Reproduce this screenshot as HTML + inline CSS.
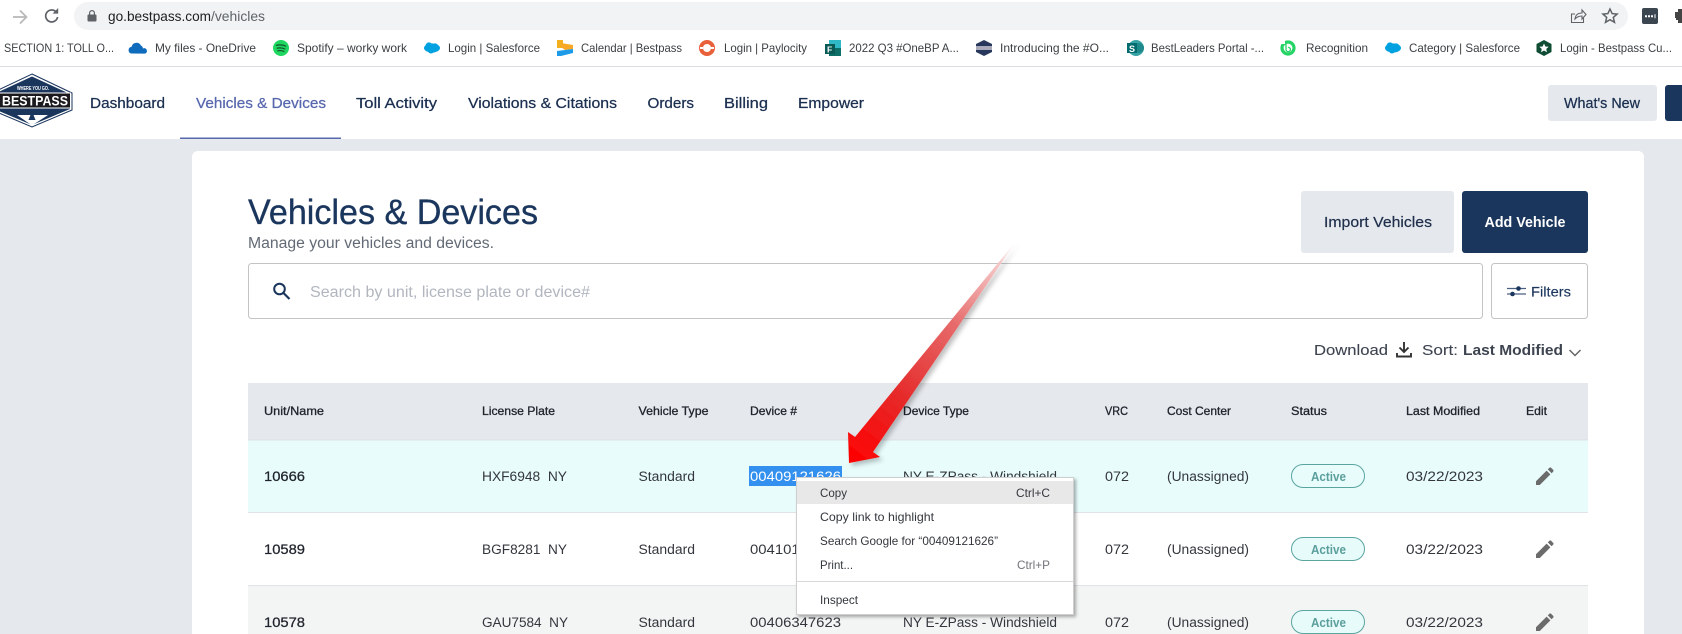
<!DOCTYPE html>
<html lang="en">
<head>
<meta charset="utf-8">
<title>Vehicles &amp; Devices</title>
<style>
html,body{margin:0;padding:0;background:#e5e8ed;width:1682px;height:634px;overflow:hidden}
svg{display:block}
text{font-family:"Liberation Sans",Arial,sans-serif;white-space:pre}
.b{font-size:12px;fill:#3c4043}
.n{font-size:14.5px;fill:#1b2f50;stroke:#1b2f50;stroke-width:.25}
.h{font-size:12px;fill:#20242c;stroke:#20242c;stroke-width:.3}
.c{font-size:13.5px;fill:#33373d}
.u{font-size:13.5px;fill:#20242c;stroke:#20242c;stroke-width:.25}
.a{font-size:12.5px;font-weight:bold;fill:#5b9f9c}
.m{font-size:12px;fill:#33373d}
.p{fill:none;stroke:#5aa5a0;stroke-width:1}
</style>
</head>
<body>
<svg xmlns="http://www.w3.org/2000/svg" width="1682" height="634" viewBox="0 0 1682 634">
<defs>
<linearGradient id="ag" gradientUnits="userSpaceOnUse" x1="1017" y1="240" x2="850" y2="462">
<stop offset="0" stop-color="#fff" stop-opacity=".2"/>
<stop offset=".1" stop-color="#f4c4c4" stop-opacity=".9"/>
<stop offset=".38" stop-color="#e76a6a"/>
<stop offset=".7" stop-color="#e62a2a"/>
<stop offset="1" stop-color="#ff0000"/>
</linearGradient>
<filter id="as" x="-20%" y="-20%" width="140%" height="140%"><feDropShadow dx="3" dy="3" stdDeviation="2.5" flood-color="#000" flood-opacity=".25"/></filter>
<filter id="ms" x="-5%" y="-5%" width="112%" height="112%"><feDropShadow dx="2" dy="2" stdDeviation="1.5" flood-color="#000" flood-opacity=".32"/></filter>
<path id="pen" d="M0 18V14.2L10.6 3.6l3.8 3.8L3.8 18ZM11.8 2.4 13.4.8a1.2 1.2 0 0 1 1.7 0l2.1 2.1a1.2 1.2 0 0 1 0 1.7L15.6 6.2Z" fill="#6b6b6b"/>
</defs>

<!-- chrome -->
<rect width="1682" height="66" fill="#fff"/>
<path d="M13 17H26M20 10.5 26.5 17 20 23.5" fill="none" stroke="#b8b8b8" stroke-width="1.7"/>
<path d="M57.6 17A6 6 0 1 1 55.6 11.4" fill="none" stroke="#5f6368" stroke-width="1.7"/>
<path d="M58.2 8V13.6H52.6Z" fill="#5f6368"/>
<rect x="74" y="2" width="1554" height="28" rx="14" fill="#f1f3f4"/>
<rect x="87.5" y="14.5" width="9" height="7" rx="1" fill="#5f6368"/>
<path d="M89.6 14.5V13a2.4 2.4 0 0 1 4.8 0V14.5" fill="none" stroke="#5f6368" stroke-width="1.2"/>
<text x="108" y="21" font-size="14" fill="#202124" textLength="103" lengthAdjust="spacingAndGlyphs">go.bestpass.com</text>
<text x="211" y="21" font-size="14" fill="#5f6368" textLength="54" lengthAdjust="spacingAndGlyphs">/vehicles</text>
<path d="M1575 14h-3.5v8.5h12V18M1575 19c.5-4 3-6 7-6V10l4 4.5-4 4.5v-3c-3 0-5 .8-7 3Z" fill="none" stroke="#5f6368" stroke-width="1.1"/>
<path d="M1610 9l2.1 4.6 5 .5-3.8 3.3 1.2 4.9-4.5-2.6-4.5 2.6 1.2-4.9-3.8-3.3 5-.5Z" fill="none" stroke="#5f6368" stroke-width="1.5"/>
<rect x="1642" y="8" width="16" height="16" rx="2" fill="#3c4650"/>
<path d="M1645 15.2h2v2h-2zM1648 15.2h2v2h-2zM1651 15.2h2v2h-2zM1654.5 14.2h1v4h-1z" fill="#fff"/>
<path d="M1675 12h3v-3h4v14h-4v-3h-2v-2h-1Z" fill="#444"/>

<!-- bookmarks -->
<text class="b" x="4" y="52" textLength="110" lengthAdjust="spacingAndGlyphs">SECTION 1: TOLL O...</text>
<path d="M131 53.5a3.5 3.5 0 0 1 .6-6.8 5 5 0 0 1 9.3-1.2 3.8 3.8 0 0 1 2.1 3A2.7 2.7 0 0 1 147 51a2.6 2.6 0 0 1-2.6 2.6Z" fill="#0f6cbd"/>
<text class="b" x="155" y="52" textLength="101" lengthAdjust="spacingAndGlyphs">My files - OneDrive</text>
<circle cx="281" cy="48" r="8" fill="#1ed760"/>
<path d="M276 45.500c3.500-1 7-.8 10.200.9M276.700 48.300c3-.8 6-.5 8.600.8M277.400 50.900c2.400-.6 4.800-.4 7 .7" fill="none" stroke="#14532d" stroke-width="1.200"/>
<text class="b" x="297" y="52" textLength="110" lengthAdjust="spacingAndGlyphs">Spotify – worky work</text>
<g fill="#00a1e0"><ellipse cx="432" cy="48" rx="8" ry="4.600"/><circle cx="429" cy="46" r="3.600"/><circle cx="435" cy="47" r="3.600"/><circle cx="431" cy="50.500" r="3"/></g>
<text class="b" x="448" y="52" textLength="92" lengthAdjust="spacingAndGlyphs">Login | Salesforce</text>
<path d="M557 40h6v8h-6Z" fill="#f2b01e"/><path d="M561 43l12 2v4l-8 1-4-3Z" fill="#f9a825"/><path d="M557 51l16-2v4l-12 3h-4Z" fill="#1e9be8"/>
<text class="b" x="581" y="52" textLength="101" lengthAdjust="spacingAndGlyphs">Calendar | Bestpass</text>
<circle cx="707" cy="48" r="6" fill="none" stroke="#e8613a" stroke-width="4"/>
<path d="M700 47h3v2h-3zM711 47h3v2h-3z" fill="#fff"/>
<text class="b" x="724" y="52" textLength="83" lengthAdjust="spacingAndGlyphs">Login | Paylocity</text>
<rect x="829" y="40" width="12" height="8" fill="#2fb8c6"/><rect x="829" y="48" width="12" height="8" fill="#0e6f68"/><rect x="825" y="44" width="10" height="10" fill="#0a5a55"/>
<text x="827" y="52.500" font-size="8.500" font-weight="bold" fill="#fff">F</text>
<text class="b" x="849" y="52" textLength="110" lengthAdjust="spacingAndGlyphs">2022 Q3 #OneBP A...</text>
<path d="M984 40l8 4v8l-8 4-8-4v-8Z" fill="#27375c"/><rect x="976" y="46" width="16" height="4" fill="#aab"/>
<text class="b" x="1000" y="52" textLength="109" lengthAdjust="spacingAndGlyphs">Introducing the #O...</text>
<circle cx="1136" cy="48" r="8" fill="#38a3a5"/><circle cx="1139" cy="48" r="5" fill="#1f8a8c"/><rect x="1127" y="43" width="10" height="10" fill="#036c70"/>
<text x="1129" y="52" font-size="9" font-weight="bold" fill="#fff">S</text>
<text class="b" x="1151" y="52" textLength="113" lengthAdjust="spacingAndGlyphs">BestLeaders Portal -...</text>
<circle cx="1288" cy="48" r="6" fill="none" stroke="#25d366" stroke-width="3.200"/>
<path d="M1286 43v6.500a2.200 2.200 0 1 0 2.200-2.200" fill="none" stroke="#25d366" stroke-width="1.300"/>
<rect x="1280" y="40" width="5" height="4" fill="#fff"/>
<text class="b" x="1306" y="52" textLength="62" lengthAdjust="spacingAndGlyphs">Recognition</text>
<g fill="#00a1e0"><ellipse cx="1393" cy="48" rx="8" ry="4.600"/><circle cx="1390" cy="46" r="3.600"/><circle cx="1396" cy="47" r="3.600"/><circle cx="1392" cy="50.500" r="3"/></g>
<text class="b" x="1409" y="52" textLength="111" lengthAdjust="spacingAndGlyphs">Category | Salesforce</text>
<path d="M1544 40l7.500 4v8l-7.500 4-7.500-4v-8Z" fill="#0e4d34"/>
<path d="M1544 43.500l1.400 3 3.300.3-2.500 2.200.8 3.200-3-1.700-3 1.700.8-3.200-2.500-2.200 3.300-.3Z" fill="#fff"/>
<text class="b" x="1560" y="52" textLength="112" lengthAdjust="spacingAndGlyphs">Login - Bestpass Cu...</text>
<rect y="66" width="1682" height="1" fill="#dadce0"/>

<!-- nav -->
<rect y="67" width="1682" height="72" fill="#fff"/>
<path d="M32 74 72 93V110L32 127-8 110V93Z" fill="#fff" stroke="#1b365d" stroke-width="1"/>
<path d="M32 76.500 70 94V109L32 125-6 109V94Z" fill="#1b365d"/>
<text x="33" y="90" font-size="5.500" font-weight="bold" fill="#fff" text-anchor="middle" textLength="32" lengthAdjust="spacingAndGlyphs">WHERE YOU GO.</text>
<rect x="-2" y="92.500" width="73" height="16" fill="#fff"/>
<rect x="-2" y="93.500" width="72" height="14" fill="#1a1a1e"/>
<text x="2" y="105.500" font-size="14" font-weight="bold" fill="#fff" textLength="66" lengthAdjust="spacingAndGlyphs">BESTPASS</text>
<path d="M17 115H48L32 125.500Z" fill="#fff"/>
<path d="M32 111 28.500 120H35.500Z" fill="#1b365d"/>

<text class="n" x="90" y="108" textLength="75" lengthAdjust="spacingAndGlyphs">Dashboard</text>
<text x="196" y="108" font-size="14.500" fill="#5868ae" stroke="#5868ae" stroke-width=".25" textLength="130" lengthAdjust="spacingAndGlyphs">Vehicles &amp; Devices</text>
<text class="n" x="356" y="108" textLength="81" lengthAdjust="spacingAndGlyphs">Toll Activity</text>
<text class="n" x="468" y="108" textLength="149" lengthAdjust="spacingAndGlyphs">Violations &amp; Citations</text>
<text class="n" x="647.500" y="108" textLength="46.500" lengthAdjust="spacingAndGlyphs">Orders</text>
<text class="n" x="724" y="108" textLength="44" lengthAdjust="spacingAndGlyphs">Billing</text>
<text class="n" x="798" y="108" textLength="66" lengthAdjust="spacingAndGlyphs">Empower</text>
<rect x="180" y="137.500" width="161" height="1.500" fill="#5868ae"/>
<rect x="1548" y="85" width="109" height="36" rx="3" fill="#e5e8ed"/>
<text class="n" x="1564" y="108" textLength="76" lengthAdjust="spacingAndGlyphs">What's New</text>
<rect x="1665" y="85" width="30" height="36" rx="3" fill="#1b365d"/>

<!-- card -->
<rect x="192" y="151" width="1452" height="500" rx="6" fill="#fff"/>
<text x="248" y="224" font-size="35" fill="#1b365d" stroke="#1b365d" stroke-width=".35" textLength="290" lengthAdjust="spacingAndGlyphs">Vehicles &amp; Devices</text>
<text x="248" y="248" font-size="15.500" fill="#626a75" textLength="246" lengthAdjust="spacingAndGlyphs">Manage your vehicles and devices.</text>
<rect x="1301" y="191" width="153" height="62" rx="3" fill="#e5e8ed"/>
<text x="1324" y="227" font-size="14.500" fill="#20304c" stroke="#20304c" stroke-width=".2" textLength="108" lengthAdjust="spacingAndGlyphs">Import Vehicles</text>
<rect x="1462" y="191" width="126" height="62" rx="3" fill="#1b365d"/>
<text x="1484.500" y="227" font-size="14.500" font-weight="bold" fill="#fff" textLength="81" lengthAdjust="spacingAndGlyphs">Add Vehicle</text>

<rect x="248.500" y="263.500" width="1234" height="55" rx="3" fill="#fff" stroke="#c4c4c4"/>
<circle cx="279.500" cy="289" r="5.300" fill="none" stroke="#1b365d" stroke-width="2"/>
<path d="M283.500 293 289.500 299" stroke="#1b365d" stroke-width="2.200"/>
<text x="310" y="297" font-size="15.500" fill="#b1b6bf" textLength="280" lengthAdjust="spacingAndGlyphs">Search by unit, license plate or device#</text>
<rect x="1491.500" y="263.500" width="96" height="55" rx="3" fill="#fff" stroke="#c4c4c4"/>
<path d="M1507 288.500H1526M1507 294H1526" stroke="#4a5f80" stroke-width="1.300"/>
<circle cx="1518.500" cy="288.500" r="2.300" fill="#1b365d"/><circle cx="1512.500" cy="294" r="2.300" fill="#1b365d"/>
<text x="1531" y="296.500" font-size="14" fill="#1b365d" stroke="#1b365d" stroke-width=".15" textLength="40" lengthAdjust="spacingAndGlyphs">Filters</text>

<text x="1314" y="355" font-size="15" fill="#3d4450" stroke="#3d4450" stroke-width=".1" textLength="74" lengthAdjust="spacingAndGlyphs">Download</text>
<path d="M1404 342V352M1399.500 347.500 1404 352 1408.500 347.500" fill="none" stroke="#333" stroke-width="1.900"/>
<path d="M1397 353V356.500H1411V353" fill="none" stroke="#333" stroke-width="1.900"/>
<text x="1422" y="355" font-size="15" fill="#3d4450" stroke="#3d4450" stroke-width=".1" textLength="36" lengthAdjust="spacingAndGlyphs">Sort:</text>
<text x="1463" y="355" font-size="15" font-weight="bold" fill="#3d4450" textLength="100" lengthAdjust="spacingAndGlyphs">Last Modified</text>
<path d="M1569.500 350 1575 355.500 1580.500 350" fill="none" stroke="#666" stroke-width="1.500"/>

<!-- table -->
<rect x="248" y="383" width="1340" height="57" fill="#e5e8ed"/>
<rect x="248" y="440" width="1340" height="72" fill="#e8fcfc"/>
<rect x="248" y="439.500" width="1340" height="1" fill="#dcdfe3"/>
<rect x="248" y="512" width="1340" height="1" fill="#e0e3e7"/>
<rect x="248" y="513" width="1340" height="72" fill="#fff"/>
<rect x="248" y="585" width="1340" height="1" fill="#e0e3e7"/>
<rect x="248" y="586" width="1340" height="48" fill="#f3f5f5"/>

<text class="h" x="264" y="415" textLength="60" lengthAdjust="spacingAndGlyphs">Unit/Name</text>
<text class="h" x="482" y="415" textLength="73" lengthAdjust="spacingAndGlyphs">License Plate</text>
<text class="h" x="638.500" y="415" textLength="70" lengthAdjust="spacingAndGlyphs">Vehicle Type</text>
<text class="h" x="750" y="415" textLength="47" lengthAdjust="spacingAndGlyphs">Device #</text>
<text class="h" x="903" y="415" textLength="66" lengthAdjust="spacingAndGlyphs">Device Type</text>
<text class="h" x="1105" y="415" textLength="23" lengthAdjust="spacingAndGlyphs">VRC</text>
<text class="h" x="1167" y="415" textLength="64" lengthAdjust="spacingAndGlyphs">Cost Center</text>
<text class="h" x="1291" y="415" textLength="36" lengthAdjust="spacingAndGlyphs">Status</text>
<text class="h" x="1406" y="415" textLength="74" lengthAdjust="spacingAndGlyphs">Last Modified</text>
<text class="h" x="1526" y="415" textLength="21" lengthAdjust="spacingAndGlyphs">Edit</text>

<!-- row 1 -->
<text class="u" x="264" y="481" textLength="41" lengthAdjust="spacingAndGlyphs">10666</text>
<text class="c" x="482" y="481" textLength="85" lengthAdjust="spacingAndGlyphs">HXF6948  NY</text>
<text class="c" x="638.500" y="481" textLength="56.500" lengthAdjust="spacingAndGlyphs">Standard</text>
<rect x="749" y="466" width="93" height="20" fill="#3390ef"/>
<text x="750" y="481" font-size="13.500" fill="#fff" textLength="91" lengthAdjust="spacingAndGlyphs">00409121626</text>
<text class="c" x="903" y="481" textLength="154" lengthAdjust="spacingAndGlyphs">NY E-ZPass - Windshield</text>
<text class="c" x="1105" y="481" textLength="24" lengthAdjust="spacingAndGlyphs">072</text>
<text class="c" x="1167" y="481" textLength="82" lengthAdjust="spacingAndGlyphs">(Unassigned)</text>
<rect class="p" x="1291.500" y="464.500" width="73" height="23" rx="11.500"/>
<text class="a" x="1311" y="481" textLength="35" lengthAdjust="spacingAndGlyphs">Active</text>
<text class="c" x="1406" y="481" textLength="77" lengthAdjust="spacingAndGlyphs">03/22/2023</text>
<use href="#pen" x="1536" y="467"/>

<!-- row 2 -->
<text class="u" x="264" y="554" textLength="41" lengthAdjust="spacingAndGlyphs">10589</text>
<text class="c" x="482" y="554" textLength="85" lengthAdjust="spacingAndGlyphs">BGF8281  NY</text>
<text class="c" x="638.500" y="554" textLength="56.500" lengthAdjust="spacingAndGlyphs">Standard</text>
<text class="c" x="750" y="554" textLength="91" lengthAdjust="spacingAndGlyphs">00410121626</text>
<text class="c" x="1105" y="554" textLength="24" lengthAdjust="spacingAndGlyphs">072</text>
<text class="c" x="1167" y="554" textLength="82" lengthAdjust="spacingAndGlyphs">(Unassigned)</text>
<rect class="p" x="1291.500" y="537.500" width="73" height="23" rx="11.500" style="fill:#e8fbfb"/>
<text class="a" x="1311" y="554" textLength="35" lengthAdjust="spacingAndGlyphs">Active</text>
<text class="c" x="1406" y="554" textLength="77" lengthAdjust="spacingAndGlyphs">03/22/2023</text>
<use href="#pen" x="1536" y="540"/>

<!-- row 3 -->
<text class="u" x="264" y="627" textLength="41" lengthAdjust="spacingAndGlyphs">10578</text>
<text class="c" x="482" y="627" textLength="86" lengthAdjust="spacingAndGlyphs">GAU7584  NY</text>
<text class="c" x="638.500" y="627" textLength="56.500" lengthAdjust="spacingAndGlyphs">Standard</text>
<text class="c" x="750" y="627" textLength="91" lengthAdjust="spacingAndGlyphs">00406347623</text>
<text class="c" x="903" y="627" textLength="154" lengthAdjust="spacingAndGlyphs">NY E-ZPass - Windshield</text>
<text class="c" x="1105" y="627" textLength="24" lengthAdjust="spacingAndGlyphs">072</text>
<text class="c" x="1167" y="627" textLength="82" lengthAdjust="spacingAndGlyphs">(Unassigned)</text>
<rect class="p" x="1291.500" y="610.500" width="73" height="23" rx="11.500" style="fill:#e8fbfb"/>
<text class="a" x="1311" y="627" textLength="35" lengthAdjust="spacingAndGlyphs">Active</text>
<text class="c" x="1406" y="627" textLength="77" lengthAdjust="spacingAndGlyphs">03/22/2023</text>
<use href="#pen" x="1536" y="613"/>

<!-- arrow -->
<path d="M1017 240 873 452 880 457 849 463 848 432 855 437Z" fill="url(#ag)" filter="url(#as)"/>

<!-- context menu -->
<rect x="796.500" y="477.500" width="277" height="137" fill="#fff" stroke="#cfcfcf" filter="url(#ms)"/>
<rect x="797" y="481" width="276" height="23" fill="#e8e8e8"/>
<text class="m" x="820" y="497" textLength="27" lengthAdjust="spacingAndGlyphs">Copy</text>
<text class="m" x="1016" y="497" textLength="34" lengthAdjust="spacingAndGlyphs">Ctrl+C</text>
<text class="m" x="820" y="521" textLength="114" lengthAdjust="spacingAndGlyphs">Copy link to highlight</text>
<text class="m" x="820" y="545" textLength="178" lengthAdjust="spacingAndGlyphs">Search Google for “00409121626”</text>
<text class="m" x="820" y="569" textLength="33" lengthAdjust="spacingAndGlyphs">Print...</text>
<text x="1017" y="569" font-size="12" fill="#6f7378" textLength="33" lengthAdjust="spacingAndGlyphs">Ctrl+P</text>
<rect x="797" y="581" width="276" height="1" fill="#d8d8d8"/>
<text class="m" x="820" y="604" textLength="38" lengthAdjust="spacingAndGlyphs">Inspect</text>
</svg>
</body>
</html>
